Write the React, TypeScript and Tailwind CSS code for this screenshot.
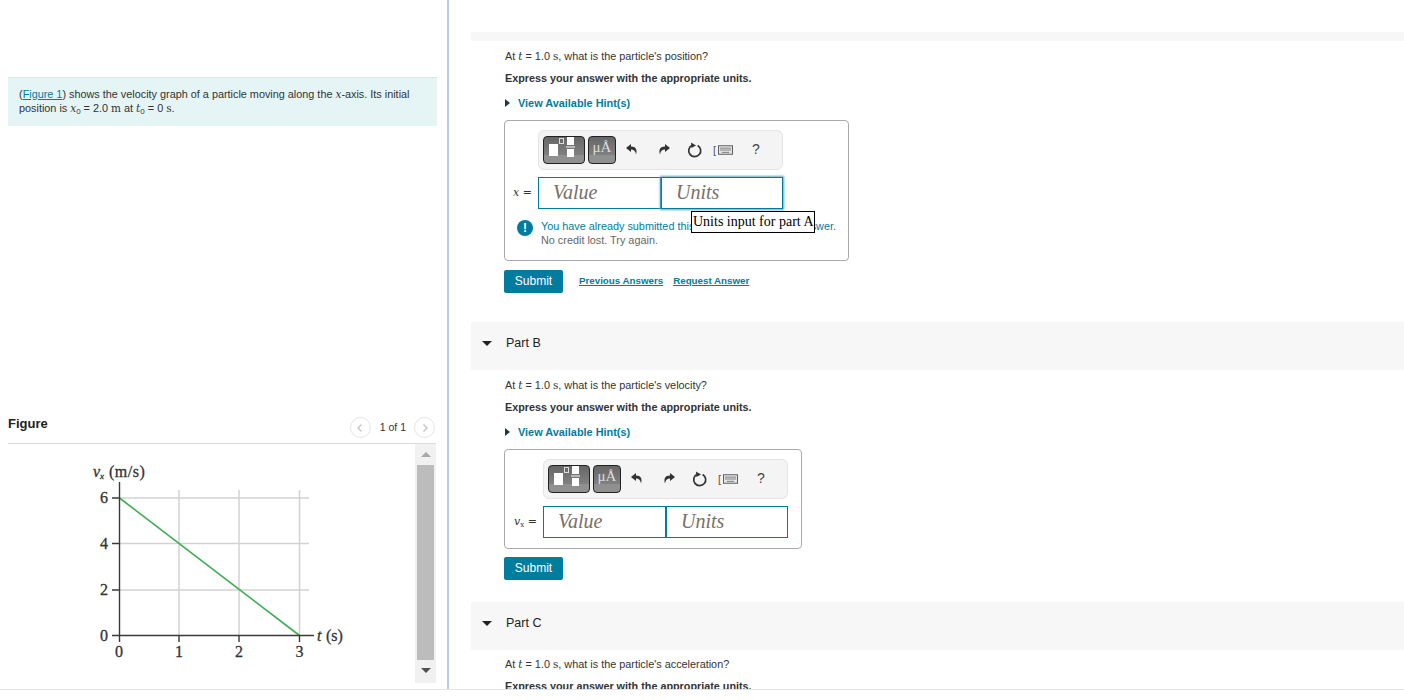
import React from 'react';

const teal = 'text-[#007c9e]';
const mathFont = "font-['DejaVu_Serif',serif]";

const T = () => <i className={`${mathFont} text-[10.5px]`}>t</i>;

const Toolbar = () => (
  <div className="w-[245px] h-10 bg-[#f4f4f4] border border-[#e4e4e4] rounded-md flex items-center pl-[4px]">
    <div className="relative w-[42px] h-[28px] rounded-[4px] border border-[#222] bg-[linear-gradient(#666_0%,#808080_68%,#909090_68%,#909090_100%)]">
      <svg viewBox="0 0 40 26" className="absolute inset-0 w-full h-full">
        <rect x="5" y="7" width="9" height="12" fill="#fff" />
        <rect x="15.5" y="1.5" width="4" height="5" fill="none" stroke="#ddd" strokeWidth="1" />
        <rect x="23" y="0" width="7" height="8" fill="#fff" />
        <rect x="22" y="9.5" width="9" height="1" fill="#fff" />
        <rect x="23" y="12" width="7" height="8" fill="#fff" />
      </svg>
    </div>
    <div className="ml-[3px] w-[28px] h-[28px] rounded-[4px] border border-[#222] bg-[linear-gradient(#666_0%,#808080_68%,#909090_68%,#909090_100%)] text-[#ddd] font-['Liberation_Serif',serif] text-[15px] leading-[20px] text-center">
      μÅ
    </div>
    <svg viewBox="0 0 14 14" className="ml-[9px] -mt-[2px] w-[14px] h-[14px]">
      <path d="M6 2 L1 6 L6 10 L6 7.5 C9 7.5 10.5 9 11 12.5 C12.5 8 11 4.6 6 4.6 Z" fill="#333" />
    </svg>
    <svg viewBox="0 0 14 14" className="ml-[18px] -mt-[2px] w-[14px] h-[14px]">
      <path d="M8 2 L13 6 L8 10 L8 7.5 C5 7.5 3.5 9 3 12.5 C1.5 8 3 4.6 8 4.6 Z" fill="#333" />
    </svg>
    <svg viewBox="0 0 16 16" className="ml-[16px] -mt-[1px] w-4 h-4">
      <path d="M10.6 3.4 A6 6 0 1 1 5 3.3" fill="none" stroke="#333" strokeWidth="1.7" />
      <path d="M4 0.5 L9 3.4 L4.4 6 Z" fill="#333" />
    </svg>
    <span className="ml-[10px] text-[11px] leading-none text-[#555]">[</span>
    <svg viewBox="0 0 16 10" className="ml-[2px] w-[15px] h-[10px]">
      <rect x="0.5" y="0.5" width="15" height="9" fill="#e8e8e8" stroke="#555" />
      <path d="M2 3h12M2 5h12M4 7.5h8" stroke="#777" strokeWidth="1" />
    </svg>
    <span className="ml-[19px] -mt-[2px] text-[14px] text-[#444]">?</span>
  </div>
);

const Inputs = ({ focused }: { focused?: boolean }) => (
  <div className="flex">
    <div className="w-[123px] h-[32px] border border-[#007c9e] pl-[14px] font-['Liberation_Serif',serif] italic text-[20px] leading-[28px] text-[#776f66]">
      Value
    </div>
    <div className={`w-[122px] h-[32px] border border-[#007c9e] pl-[14px] font-['Liberation_Serif',serif] italic text-[20px] leading-[28px] text-[#776f66] ${focused ? 'shadow-[0_0_2px_1px_#5aa9c0]' : ''}`}>
      Units
    </div>
  </div>
);

const PartHeader = ({ label }: { label: string }) => (
  <div className="h-[48px] pb-[6px] bg-[#f7f7f7] flex items-center">
    <div className="ml-[11px] w-0 h-0 border-x-[5px] border-x-transparent border-t-[5px] border-t-[#222] mt-[1px]" />
    <span className="ml-[14px] text-[12.5px] text-[#222]">{label}</span>
  </div>
);

const Question = ({ what }: { what: string }) => (
  <div className="pl-[34px] text-[#333]">
    <div className="text-[10.85px] leading-[16px]">
      At <T /> = 1.0 <span className={`${mathFont} text-[10.5px]`}>s</span>, what is the particle's {what}?
    </div>
    <div className="mt-[6px] text-[10.8px] leading-[16px] font-bold whitespace-nowrap">
      Express your answer with the appropriate units.
    </div>
  </div>
);

const Hint = () => (
  <div className="mt-[9px] flex items-center h-4">
    <div className="w-0 h-0 border-y-[4px] border-y-transparent border-l-[5px] border-l-[#1c3b4a]" />
    <span className={`ml-2 text-[10.9px] font-bold ${teal}`}>View Available Hint(s)</span>
  </div>
);

const SubmitButton = () => (
  <div className="w-[59px] h-[23px] bg-[#007c9e] rounded-[2px] text-white text-[12px] leading-[22px] text-center">
    Submit
  </div>
);

const Chart = () => (
  <svg width="407" height="239" viewBox="8 444 407 239" className="shrink-0">
    <g stroke="#d2d2d2" strokeWidth="1.5">
      <path d="M119 498H309M119 543.5H309M119 590H309" />
      <path d="M179 490V635M239 490V635M299.5 490V635" />
    </g>
    <path d="M119.5 498L299.5 635.5" stroke="#3fae55" strokeWidth="1.6" fill="none" />
    <g stroke="#3a3a3a" strokeWidth="1.4">
      <path d="M119.5 482V642M112 635.5H314" />
      <path d="M112 498H119M112 543.5H119M112 590H119" />
      <path d="M179 636V642M239 636V642M299.5 636V642" />
    </g>
    <g fontFamily="Liberation Serif, serif" fontSize="16" fill="#333" stroke="#333" strokeWidth="0.3">
      <text x="100" y="503">6</text>
      <text x="100" y="549">4</text>
      <text x="100" y="595">2</text>
      <text x="100" y="641">0</text>
      <text x="119" y="657" textAnchor="middle">0</text>
      <text x="179" y="657" textAnchor="middle">1</text>
      <text x="239" y="657" textAnchor="middle">2</text>
      <text x="299.5" y="657" textAnchor="middle">3</text>
      <text x="93" y="477" fontStyle="italic">v</text>
      <text x="100" y="479" fontStyle="italic" fontSize="9">x</text>
      <text x="109" y="477" letterSpacing="0.5">(m/s)</text>
      <text x="317" y="641" fontStyle="italic">t</text>
      <text x="326" y="641">(s)</text>
    </g>
  </svg>
);

const Scrollbar = () => (
  <div className="w-[21px] h-[239px] bg-[#f1f1f1] flex flex-col items-center">
    <div className="mt-[8px] w-0 h-0 border-x-[5px] border-x-transparent border-b-[5px] border-b-[#a8a8a8]" />
    <div className="mt-[8px] w-[17px] h-[195px] bg-[#bcbcbc]" />
    <div className="mt-[8px] w-0 h-0 border-x-[5px] border-x-transparent border-t-[5px] border-t-[#505050]" />
  </div>
);

const NavCircle = ({ d }: { d: string }) => (
  <div className="w-[21px] h-[21px] rounded-full border border-[#e4e4e4] flex items-center justify-center">
    <svg viewBox="0 0 10 10" className="w-[10px] h-[10px]">
      <path d={d} fill="none" stroke="#c4c4c4" strokeWidth="1.4" />
    </svg>
  </div>
);

export default function App() {
  return (
    <div className="w-[1404px] h-[700px] overflow-hidden bg-white font-['Liberation_Sans',Arial,sans-serif]">
      <div className="h-[690px] border-b border-[#e2e4e6] flex overflow-hidden">
        {/* left column */}
        <div className="w-[449px] shrink-0 border-r-2 border-[#b9cde0] pl-2 pr-[10px] pt-[77px]">
          <div className="w-[429px] h-[49px] bg-[#e5f5f6] border-t border-[#d9e6e8] pl-[11px] pt-[9px] text-[10.85px] leading-[14px] text-[#333]">
            (<span className={`${teal} underline`}>Figure 1</span>) shows the velocity graph of a particle moving along the <i className={`${mathFont} text-[10.5px]`}>x</i>-axis. Its initial
            <br />
            position is <i className={`${mathFont} text-[10.5px]`}>x</i><sub className="text-[8px]">0</sub> = 2.0 <span className={`${mathFont} text-[10.5px]`}>m</span> at <T /><sub className="text-[8px]">0</sub> = 0 <span className={`${mathFont} text-[10.5px]`}>s</span>.
          </div>
          <div className="mt-[288px] w-[428px] h-[30px] border-b border-[#dcdcdc] flex items-start justify-between">
            <span className="mt-[2px] text-[13px] leading-[16px] font-bold text-[#222]">Figure</span>
            <div className="flex items-center mt-[3px] mr-[1px]">
              <NavCircle d="M6.5 1.5L3 5l3.5 3.5" />
              <span className="ml-[9px] mr-[8px] text-[10.5px] text-[#333]">1 of 1</span>
              <NavCircle d="M3.5 1.5L7 5 3.5 8.5" />
            </div>
          </div>
          <div className="flex w-[428px]">
            <Chart />
            <Scrollbar />
          </div>
        </div>

        {/* right column */}
        <div className="flex-1 pl-[22px]">
          <div className="mt-[32px] h-[9px] bg-[#f7f7f7]" />
          <div className="mt-[7px]">
            <Question what="position" />
          </div>
          <div className="pl-[33px]">
            <div className="pl-[1px]">
              <Hint />
            </div>
            <div className="relative mt-[9px] w-[345px] h-[141px] border border-[#aaa] rounded-[4px]">
              <div className="absolute left-[33px] top-[9px]">
                <Toolbar />
              </div>
              <div className="pt-[56px] pl-[8px] flex items-center">
                <div className={`w-[25px] ${mathFont} text-[11px] text-[#333] whitespace-nowrap`}>
                  <i>x</i> =
                </div>
                <Inputs focused />
              </div>
              <div className="mt-[10px] ml-[12px] flex">
                <div className="mt-[1px] w-4 h-4 shrink-0 rounded-full bg-[#007c9e] text-white text-[12px] leading-4 font-bold text-center">
                  !
                </div>
                <div className="ml-[8px] text-[10.85px] leading-[14px] whitespace-nowrap">
                  <div className={teal}>You have already submitted this answer. Enter a new answer.</div>
                  <div className="text-[#666]">No credit lost. Try again.</div>
                </div>
              </div>
              <div className="absolute left-[186px] top-[90px] w-[124px] h-[22px] bg-white border border-black text-black font-['Liberation_Serif',serif] text-[14px] leading-[20px] pl-[1px] whitespace-nowrap">
                Units input for part A
              </div>
            </div>
            <div className="mt-[9px] flex items-center">
              <SubmitButton />
              <span className={`ml-4 text-[9.75px] font-bold underline ${teal}`}>Previous Answers</span>
              <span className={`ml-[10px] text-[9.75px] font-bold underline ${teal}`}>Request Answer</span>
            </div>
          </div>

          <div className="mt-[29px]">
            <PartHeader label="Part B" />
          </div>
          <div className="mt-[7px]">
            <Question what="velocity" />
          </div>
          <div className="pl-[33px]">
            <div className="pl-[1px]">
              <Hint />
            </div>
            <div className="mt-[9px] w-[298px] h-[100px] border border-[#aaa] rounded-[4px]">
              <div className="mt-[9px] ml-[38px]">
                <Toolbar />
              </div>
              <div className="mt-[7px] pl-[9px] flex items-center">
                <div className={`w-[29px] ${mathFont} text-[11px] text-[#333] whitespace-nowrap`}>
                  <i>v</i><sub className="text-[7px]">x</sub> =
                </div>
                <Inputs />
              </div>
            </div>
            <div className="mt-[8px]">
              <SubmitButton />
            </div>
          </div>

          <div className="mt-[22px]">
            <PartHeader label="Part C" />
          </div>
          <div className="mt-[6px]">
            <Question what="acceleration" />
          </div>
        </div>
      </div>
    </div>
  );
}
